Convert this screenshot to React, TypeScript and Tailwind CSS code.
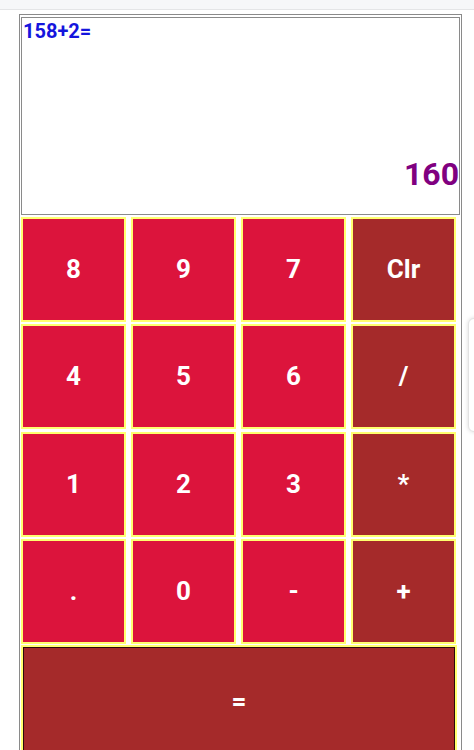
import React, { useState } from 'react';

const keys: { label: string; op?: boolean }[] = [
    { label: '8' }, { label: '9' }, { label: '7' }, { label: 'Clr', op: true },
    { label: '4' }, { label: '5' }, { label: '6' }, { label: '/', op: true },
    { label: '1' }, { label: '2' }, { label: '3' }, { label: '*', op: true },
    { label: '.' }, { label: '0' }, { label: '-' }, { label: '+', op: true },
];

export default function App() {
    const [expr] = useState('158+2=');
    const [result] = useState('160');

    return (
        <div className="min-h-screen bg-white font-['Roboto',sans-serif]">
            {/* browser chrome remnant */}
            <div className="h-[10px] bg-[#f6f7f9] border-b border-[#e4e5e7]" />

            <div className="ml-[19px] mt-[4px] w-[443px] border border-[#8a8a8a] px-[1px] pt-[2px]">
                {/* Display */}
                <div className="flex h-[198px] flex-col border border-[#8a8a8a] bg-white">
                    <div className="pl-[1px] pt-[2px] text-[20px] font-bold leading-[23px] text-[#1515dd]">{expr}</div>
                    <div className="mt-auto mb-[21px] text-right text-[32px] font-bold leading-[37px] text-[#800080]">
                        {result}
                    </div>
                </div>

                {/* Keypad */}
                <div className="mt-[1.5px] grid grid-cols-[repeat(4,105px)] gap-x-[5px] gap-y-[2.5px]">
                    {keys.map((k) => (
                        <button
                            key={k.label}
                            className={
                                'h-[105px] border-2 border-[#ffff70] text-[26px] font-bold text-white ' +
                                (k.op ? 'bg-[#a52a2a]' : 'bg-[#dc143c]')
                            }
                        >
                            {k.label}
                        </button>
                    ))}
                </div>

                <div className="mt-[1px] w-[436px] border-2 border-[#ffff70]">
                    <button className="flex h-[108px] w-full items-center justify-center border border-[#2a0a0a] bg-[#a52a2a] text-[26px] font-bold text-white">
                        =
                    </button>
                </div>
            </div>

            {/* floating side tab */}
            <div className="fixed left-[468px] top-[318px] h-[114px] w-[20px] rounded-l-md border border-[#e2e2e2] bg-white shadow-[0_0_4px_rgba(0,0,0,0.15)]" />
        </div>
    );
}
